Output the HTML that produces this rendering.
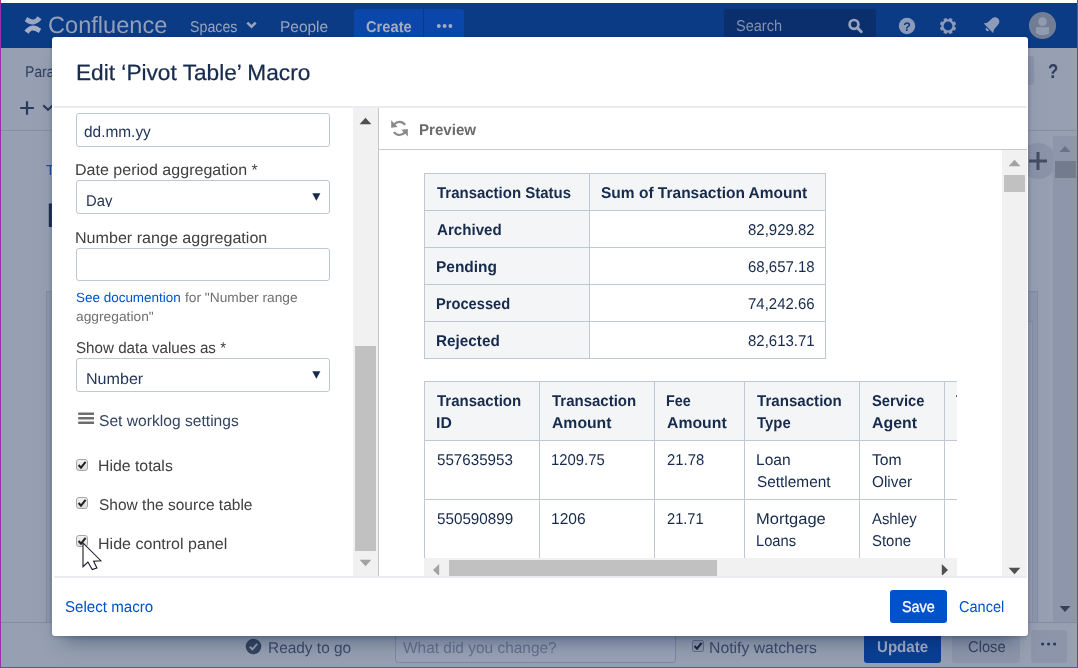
<!DOCTYPE html>
<html lang="en">
<head>
<meta charset="utf-8">
<title>Edit 'Pivot Table' Macro - Confluence</title>
<style>
html,body{margin:0;padding:0;}
body{width:1078px;height:668px;position:relative;overflow:hidden;background:#96a0b2;font-family:"Liberation Sans",sans-serif;text-rendering:geometricPrecision;}
.abs,.t,div,svg{position:absolute;}
div{box-sizing:border-box;}
.t{white-space:nowrap;line-height:1;transform-origin:0 50%;}
#bg{left:0;top:0;width:1078px;height:668px;overflow:hidden;will-change:transform;}
#dlg{left:0;top:0;width:1078px;height:668px;will-change:transform;}
#panel{left:52px;top:37px;width:976px;height:599px;background:#fff;border-radius:3px;box-shadow:0 14px 20px -11px rgba(9,30,66,.5),0 1px 4px rgba(9,30,66,.22);}
.inp{left:76px;width:254px;height:34px;border:1px solid #c1c7d0;border-radius:3px;background:#fff;}
.cb{left:76px;width:12px;height:12px;border:1px solid #a6a6a6;border-radius:3px;background:linear-gradient(#f2f2f2,#dddddd);}
</style>
</head>
<body>
<!-- ================= dimmed background page ================= -->
<div id="bg">
  <div style="left:0;top:0;width:1078px;height:3px;background:#fff"></div>
  <div style="left:0;top:3px;width:1078px;height:45px;background:#0a3b84"></div>
  <!-- confluence logo -->
  <svg style="left:22px;top:14px" width="22" height="22" viewBox="0 0 22 22">
    <path id="rib" d="M5.2 3.1 L2.8 7.2 C6 9.6 9 10.8 11.5 10.4 C14.5 10 17.5 8 19.6 5.2 L15.4 2.2 C14.2 4 13 5.2 11.8 5.4 C9.8 5.8 7.5 4.6 5.2 3.1 Z" fill="#9ba7bf"/>
    <path d="M5.2 3.1 L2.8 7.2 C6 9.6 9 10.8 11.5 10.4 C14.5 10 17.5 8 19.6 5.2 L15.4 2.2 C14.2 4 13 5.2 11.8 5.4 C9.8 5.8 7.5 4.6 5.2 3.1 Z" fill="#a3aec4" transform="rotate(180 11 11)"/>
  </svg>
  <!-- spaces chevron -->
  <svg style="left:246px;top:21px" width="11" height="8" viewBox="0 0 11 8"><path d="M1.3 1.6 L5.5 5.6 L9.7 1.6" fill="none" stroke="#98a4bc" stroke-width="2.6"/></svg>
  <!-- create buttons -->
  <div style="left:354px;top:9px;width:69px;height:32px;background:#0b47ab;border-radius:3px 0 0 3px"></div>
  <div style="left:424px;top:9px;width:40px;height:32px;background:#0b47ab;border-radius:0 3px 3px 0"></div>
  <svg style="left:436px;top:23px" width="18" height="6" viewBox="0 0 18 6"><circle cx="2.8" cy="3" r="1.95" fill="#a4acbf"/><circle cx="8.6" cy="3" r="1.95" fill="#a4acbf"/><circle cx="14.4" cy="3" r="1.95" fill="#a4acbf"/></svg>
  <!-- search -->
  <div style="left:724px;top:9px;width:152px;height:34px;background:#0a2f6c;border-radius:3px"></div>
  <svg style="left:847px;top:17px" width="18" height="18" viewBox="0 0 18 18"><circle cx="7.0" cy="7.4" r="4.4" fill="none" stroke="#97a4bf" stroke-width="2.7"/><path d="M10.4 10.9 L14.3 14.8" stroke="#97a4bf" stroke-width="2.9" stroke-linecap="round"/></svg>
  <!-- help -->
  <svg style="left:898px;top:17px" width="18" height="18" viewBox="0 0 18 18"><circle cx="9" cy="9" r="8.2" fill="#8d9bb8"/><text x="9" y="13.6" text-anchor="middle" font-family="Liberation Sans, sans-serif" font-weight="bold" font-size="12.5" fill="#0a3b84">?</text></svg>
  <!-- gear -->
  <svg style="left:937.7px;top:15.8px" width="20" height="20" viewBox="-10 -10 20 20">
    <g fill="#8d9bb8" transform="rotate(22.5)"><rect x="-1.7" y="-8.2" width="3.4" height="16.4" rx="0.5"/><rect x="-1.7" y="-8.2" width="3.4" height="16.4" rx="0.5" transform="rotate(45)"/><rect x="-1.7" y="-8.2" width="3.4" height="16.4" rx="0.5" transform="rotate(90)"/><rect x="-1.7" y="-8.2" width="3.4" height="16.4" rx="0.5" transform="rotate(135)"/></g>
    <circle r="5.5" fill="none" stroke="#8d9bb8" stroke-width="2.4"/><circle r="4.4" fill="#0a3b84"/>
  </svg>
  <!-- bell -->
  <svg style="left:980px;top:12px" width="24" height="24" viewBox="0 0 24 24"><g transform="translate(12.64 12) rotate(45)" fill="#8d9bb8"><path d="M-6.6 6 L6.6 6 L4.7 2.6 L4.4 -3 C4.4 -6 2.5 -7.7 0 -7.7 C-2.5 -7.7 -4.4 -6 -4.4 -3 L-4.7 2.6 Z"/><path d="M-2.1 7 A2.1 2.1 0 0 0 2.1 7 Z"/></g></svg>
  <!-- avatar -->
  <svg style="left:1028px;top:11px" width="29" height="29" viewBox="0 0 29 29"><circle cx="14.5" cy="14.5" r="13.6" fill="#717d95"/><circle cx="14.5" cy="10.6" r="4.3" fill="#919bb0"/><path d="M8 16.2 h13 v6.2 q-6.5 3.6 -13 0 z" fill="#919bb0"/></svg>

  <!-- editor toolbar -->
  <div style="left:0;top:130px;width:1078px;height:1px;background:#87909f"></div>
  <div style="left:1028px;top:56px;width:6px;height:29px;background:#8a93a8;border-radius:0 3px 3px 0"></div>
  <svg style="left:19px;top:100px" width="16" height="16" viewBox="0 0 16 16"><path d="M8 1.2 V14.8 M1.2 8 H14.8" stroke="#2a3a5c" stroke-width="2.2"/></svg>
  <svg style="left:42px;top:104px" width="12" height="8" viewBox="0 0 12 8"><path d="M1.2 1.3 L6 5.8 L10.8 1.3" fill="none" stroke="#2a3a5c" stroke-width="2.1"/></svg>
  <!-- macro placeholder boxes -->
  <div style="left:46px;top:291px;width:992px;height:340px;background:#8e97ac;border:1px solid #838ca1"></div>
  <div style="left:50px;top:321px;width:983px;height:310px;background:#939cb1;border:1px solid #8790a5"></div>
  <!-- plus circle -->
  <div style="left:1020px;top:143px;width:36px;height:36px;border-radius:18px;background:#8a93a8"></div>
  <svg style="left:1028px;top:151px" width="20" height="20" viewBox="0 0 20 20"><path d="M10 1 V19 M1 10 H19" stroke="#434d64" stroke-width="3"/></svg>
  <!-- page scrollbar -->
  <div style="left:1053px;top:136px;width:24px;height:486px;background:#8d96ab"></div>
  <div style="left:1055px;top:161px;width:21px;height:17px;background:#737b8e"></div>
  <svg style="left:1059px;top:145px" width="12" height="8" viewBox="0 0 12 8"><path d="M0.5 7 L6 1 L11.5 7 Z" fill="#6a7286"/></svg>
  <svg style="left:1059px;top:605px" width="12" height="8" viewBox="0 0 12 8"><path d="M0.5 1 L6 7 L11.5 1 Z" fill="#38415a"/></svg>
  <!-- bottom bar -->
  <div style="left:0;top:622px;width:1078px;height:45px;background:#96a0b2;border-top:1px solid #838ca1"></div>
  <svg style="left:245px;top:638px" width="17" height="17" viewBox="0 0 17 17"><circle cx="8.5" cy="8.5" r="7.8" fill="#36435f"/><path d="M4.8 8.8 L7.4 11.3 L12.2 5.9" fill="none" stroke="#96a0b2" stroke-width="1.9"/></svg>
  <div style="left:395px;top:630px;width:281px;height:33px;border:1px solid #7f889e;border-radius:3px;background:#98a1b6"></div>
  <div style="left:692px;top:640px;width:12px;height:12px;border:1px solid #687189;border-radius:2px;background:#8f98ac"></div>
  <svg style="left:692px;top:640px" width="12" height="12" viewBox="0 0 12 12"><path d="M2.6 6 L5 8.6 L9.6 2.8" fill="none" stroke="#1c2438" stroke-width="2"/></svg>
  <div style="left:864px;top:630px;width:77px;height:33px;background:#0a3f95;border-radius:3px"></div>
  <div style="left:952px;top:630px;width:68px;height:33px;background:#8c95aa;border-radius:3px"></div>
  <div style="left:1031px;top:629.5px;width:36px;height:33.5px;background:#8c95aa;border-radius:3px"></div>
  <svg style="left:1040px;top:641px" width="18" height="6" viewBox="0 0 18 6"><circle cx="2.6" cy="3" r="1.6" fill="#2a3a5c"/><circle cx="8.6" cy="3" r="1.6" fill="#2a3a5c"/><circle cx="14.6" cy="3" r="1.6" fill="#2a3a5c"/></svg>
<span class="t" id="t0" style="left:48.00px;top:14.25px;font-size:23.5px;color:#939fb8;transform:scaleX(1.0041);">Confluence</span>
<span class="t" id="t1" style="left:190.40px;top:20.25px;font-size:15.6px;color:#98a4bc;transform:scaleX(0.9115);">Spaces</span>
<span class="t" id="t2" style="left:280.01px;top:20.25px;font-size:15.6px;color:#98a4bc;transform:scaleX(0.9917);">People</span>
<span class="t" id="t3" style="left:366.00px;top:20.25px;font-size:15.6px;color:#a4acbf;font-weight:bold;transform:scaleX(0.9412);">Create</span>
<span class="t" id="t4" style="left:735.60px;top:19.25px;font-size:15.6px;color:#8191b2;transform:scaleX(0.9313);">Search</span>
<span class="t" id="t5" style="left:24.51px;top:65.25px;font-size:15.6px;color:#2a3a5c;transform:scaleX(0.8938);">Paragraph</span>
<span class="t" id="t6" style="left:1048.00px;top:62.25px;font-size:20px;color:#2a3a5c;font-weight:bold;transform:scaleX(0.8332);">?</span>
<span class="t" id="t7" style="left:46.00px;top:164.25px;font-size:14.5px;color:#1d4fa0;transform:scaleX(0.9888);">Table Filter and Charts</span>
<span class="t" id="t8" style="left:46.01px;top:199.25px;font-size:34px;color:#1f2f50;transform:scaleX(0.9951);">Pivot Table</span>
<span class="t" id="t9" style="left:267.51px;top:641.25px;font-size:15.6px;color:#3d4a69;transform:scaleX(0.9890);">Ready to go</span>
<span class="t" id="t10" style="left:402.50px;top:641.25px;font-size:15.6px;color:#66728c;transform:scaleX(0.9903);">What did you change?</span>
<span class="t" id="t11" style="left:708.99px;top:641.25px;font-size:15.6px;color:#3d4a69;transform:scaleX(1.0114);">Notify watchers</span>
<span class="t" id="t12" style="left:876.80px;top:640.25px;font-size:15.6px;color:#a6b0c4;font-weight:bold;transform:scaleX(0.9664);">Update</span>
<span class="t" id="t13" style="left:967.80px;top:640.25px;font-size:15.6px;color:#36435f;transform:scaleX(0.9438);">Close</span>
</div>

<!-- ================= dialog ================= -->
<div id="dlg">
  <div id="panel"></div>
  <div style="left:54px;top:106px;width:973px;height:2px;background:#ebecf0"></div>
  <div style="left:54px;top:576px;width:973px;height:2px;background:#ebecf0"></div>
  <!-- left form -->
  <div class="inp" style="top:113px"></div>
  <div class="inp" style="top:180px"></div>
  <div id="sel1" style="left:77px;top:181px;width:252px;height:26px;overflow:hidden"><span class="t" id="t17" style="left:9.45px;top:13.25px;font-size:15.6px;color:#253858;transform:scaleX(0.9504);">Day</span></div>
  <div class="inp" style="top:248px;height:33px"></div>
  <div class="inp" style="top:358px"></div>
  <svg style="left:311.5px;top:192.6px" width="9" height="8.2" viewBox="0 0 9 8.2"><path d="M0.3 0.3 H8.4 L4.35 7.8 Z" fill="#172b4d"/></svg>
  <svg style="left:311.5px;top:370.8px" width="9" height="8.2" viewBox="0 0 9 8.2"><path d="M0.3 0.3 H8.4 L4.35 7.8 Z" fill="#172b4d"/></svg>
  <svg style="left:78px;top:412px" width="17" height="13" viewBox="0 0 17 13"><path d="M0.2 1.8 H16 M0.2 6.3 H16 M0.2 10.8 H16" stroke="#6e6e6e" stroke-width="2.4"/></svg>
  <div class="cb" style="top:459px"></div>
  <div class="cb" style="top:497px"></div>
  <div class="cb" style="top:535px"></div>
  <svg style="left:76px;top:459px" width="12" height="12" viewBox="0 0 12 12"><path d="M2.6 6 L5 8.7 L9.6 2.8" fill="none" stroke="#222" stroke-width="2"/></svg>
  <svg style="left:76px;top:497px" width="12" height="12" viewBox="0 0 12 12"><path d="M2.6 6 L5 8.7 L9.6 2.8" fill="none" stroke="#222" stroke-width="2"/></svg>
  <svg style="left:76px;top:535px" width="12" height="12" viewBox="0 0 12 12"><path d="M2.6 6 L5 8.7 L9.6 2.8" fill="none" stroke="#222" stroke-width="2"/></svg>
  <!-- cursor -->
  <svg style="left:82px;top:542px" width="21" height="30" viewBox="0 0 21 30"><path d="M1 1 L1 24.7 L5.9 20 L10.3 27.6 L14.9 26 L11.6 19.3 L18.9 18.7 Z" fill="#fff" stroke="#111122" stroke-width="1.05" stroke-linejoin="miter"/></svg>
  <!-- left scrollbar -->
  <div style="left:353px;top:108px;width:25px;height:468px;background:#f1f1f1"></div>
  <div style="left:355px;top:346px;width:21px;height:205px;background:#c1c1c1"></div>
  <svg style="left:359px;top:117px" width="13" height="8" viewBox="0 0 13 8"><path d="M0.6 7.2 L6.5 0.8 L12.4 7.2 Z" fill="#505050"/></svg>
  <svg style="left:359px;top:559px" width="13" height="8" viewBox="0 0 13 8"><path d="M0.6 0.8 L6.5 7.2 L12.4 0.8 Z" fill="#a3a3a3"/></svg>
  <div style="left:378px;top:108px;width:1px;height:468px;background:#c5c7cc"></div>
  <!-- preview header -->
  <div style="left:379px;top:149px;width:648px;height:1px;background:#c9c9c9"></div>
  <svg style="left:388px;top:116px" width="24" height="25" viewBox="0 0 24 25"><g><path d="M17.04 8.81 A6.6 6.6 0 0 0 6.30 8.34" fill="none" stroke="#8a8a8a" stroke-width="2.2"/><path d="M3.2 4.2 L3.2 11.7 L9.6 11.0 Z" fill="#8a8a8a"/></g><g transform="rotate(180 11.5 12.4)"><path d="M17.04 8.81 A6.6 6.6 0 0 0 6.30 8.34" fill="none" stroke="#8a8a8a" stroke-width="2.2"/><path d="M3.2 4.2 L3.2 11.7 L9.6 11.0 Z" fill="#8a8a8a"/></g></svg>
  <!-- preview scrollbar -->
  <div style="left:1002px;top:150px;width:25px;height:426px;background:#f1f1f1"></div>
  <div style="left:1004px;top:175px;width:21px;height:17px;background:#c1c1c1"></div>
  <svg style="left:1008px;top:159px" width="13" height="8" viewBox="0 0 13 8"><path d="M0.6 7.2 L6.5 0.8 L12.4 7.2 Z" fill="#a3a3a3"/></svg>
  <svg style="left:1008px;top:567px" width="13" height="8" viewBox="0 0 13 8"><path d="M0.6 0.8 L6.5 7.2 L12.4 0.8 Z" fill="#505050"/></svg>
  <!-- table 1 -->
  <div style="left:424px;top:173px;width:402px;height:186px;background:#c1c7d0"></div>
  <div style="left:425px;top:174px;width:164px;height:36px;background:#f4f5f7"></div>
  <div style="left:590px;top:174px;width:235px;height:36px;background:#f4f5f7"></div>
  <div style="left:425px;top:211px;width:164px;height:36px;background:#f4f5f7"></div>
  <div style="left:590px;top:211px;width:235px;height:36px;background:#fff"></div>
  <div style="left:425px;top:248px;width:164px;height:36px;background:#f4f5f7"></div>
  <div style="left:590px;top:248px;width:235px;height:36px;background:#fff"></div>
  <div style="left:425px;top:285px;width:164px;height:36px;background:#f4f5f7"></div>
  <div style="left:590px;top:285px;width:235px;height:36px;background:#fff"></div>
  <div style="left:425px;top:322px;width:164px;height:36px;background:#f4f5f7"></div>
  <div style="left:590px;top:322px;width:235px;height:36px;background:#fff"></div>
  <!-- table 2 (clipped) -->
  <div id="tbl2" style="left:424px;top:381px;width:533px;height:177px;overflow:hidden">
    <div style="left:0;top:0;width:700px;height:300px;background:#c1c7d0"></div>
    <div style="left:1px;top:1px;width:114px;height:58px;background:#f4f5f7"></div>
    <div style="left:116px;top:1px;width:114px;height:58px;background:#f4f5f7"></div>
    <div style="left:231px;top:1px;width:89px;height:58px;background:#f4f5f7"></div>
    <div style="left:321px;top:1px;width:114px;height:58px;background:#f4f5f7"></div>
    <div style="left:436px;top:1px;width:84px;height:58px;background:#f4f5f7"></div>
    <div style="left:521px;top:1px;width:114px;height:58px;background:#f4f5f7"></div>
    <div style="left:1px;top:60px;width:114px;height:58px;background:#fff"></div>
    <div style="left:116px;top:60px;width:114px;height:58px;background:#fff"></div>
    <div style="left:231px;top:60px;width:89px;height:58px;background:#fff"></div>
    <div style="left:321px;top:60px;width:114px;height:58px;background:#fff"></div>
    <div style="left:436px;top:60px;width:84px;height:58px;background:#fff"></div>
    <div style="left:521px;top:60px;width:114px;height:58px;background:#fff"></div>
    <div style="left:1px;top:119px;width:114px;height:58px;background:#fff"></div>
    <div style="left:116px;top:119px;width:114px;height:58px;background:#fff"></div>
    <div style="left:231px;top:119px;width:89px;height:58px;background:#fff"></div>
    <div style="left:321px;top:119px;width:114px;height:58px;background:#fff"></div>
    <div style="left:436px;top:119px;width:84px;height:58px;background:#fff"></div>
    <div style="left:521px;top:119px;width:114px;height:58px;background:#fff"></div>
<span class="t" id="t42" style="left:13.00px;top:13.25px;font-size:15.6px;color:#172b4d;font-weight:bold;transform:scaleX(0.9620);">Transaction</span>
<span class="t" id="t43" style="left:11.99px;top:35.25px;font-size:15.6px;color:#172b4d;font-weight:bold;transform:scaleX(1.0117);">ID</span>
<span class="t" id="t44" style="left:128.00px;top:13.25px;font-size:15.6px;color:#172b4d;font-weight:bold;transform:scaleX(0.9620);">Transaction</span>
<span class="t" id="t45" style="left:128.00px;top:35.25px;font-size:15.6px;color:#172b4d;font-weight:bold;transform:scaleX(1.0100);">Amount</span>
<span class="t" id="t46" style="left:242.28px;top:13.25px;font-size:15.6px;color:#172b4d;font-weight:bold;transform:scaleX(0.9198);">Fee</span>
<span class="t" id="t47" style="left:243.00px;top:35.25px;font-size:15.6px;color:#172b4d;font-weight:bold;transform:scaleX(1.0134);">Amount</span>
<span class="t" id="t48" style="left:333.00px;top:13.25px;font-size:15.6px;color:#172b4d;font-weight:bold;transform:scaleX(0.9689);">Transaction</span>
<span class="t" id="t49" style="left:333.00px;top:35.25px;font-size:15.6px;color:#172b4d;font-weight:bold;transform:scaleX(0.9557);">Type</span>
<span class="t" id="t50" style="left:447.60px;top:13.25px;font-size:15.6px;color:#172b4d;font-weight:bold;transform:scaleX(0.9440);">Service</span>
<span class="t" id="t51" style="left:447.60px;top:35.25px;font-size:15.6px;color:#172b4d;font-weight:bold;transform:scaleX(1.0183);">Agent</span>
<span class="t" id="t52" style="left:532.30px;top:13.25px;font-size:15.6px;color:#172b4d;font-weight:bold;transform:scaleX(0.9620);">Transaction</span>
<span class="t" id="t53" style="left:532.97px;top:35.25px;font-size:15.6px;color:#172b4d;font-weight:bold;transform:scaleX(1.0260);">Date</span>
<span class="t" id="t54" style="left:13.00px;top:72.25px;font-size:15.6px;color:#172b4d;transform:scaleX(0.9717);">557635953</span>
<span class="t" id="t55" style="left:127.05px;top:72.25px;font-size:15.6px;color:#172b4d;transform:scaleX(0.9515);">1209.75</span>
<span class="t" id="t56" style="left:243.00px;top:72.25px;font-size:15.6px;color:#172b4d;transform:scaleX(0.9515);">21.78</span>
<span class="t" id="t57" style="left:332.00px;top:72.25px;font-size:15.6px;color:#172b4d;transform:scaleX(0.9991);">Loan</span>
<span class="t" id="t58" style="left:333.00px;top:94.25px;font-size:15.6px;color:#172b4d;transform:scaleX(0.9865);">Settlement</span>
<span class="t" id="t59" style="left:447.60px;top:72.25px;font-size:15.6px;color:#172b4d;transform:scaleX(1.0078);">Tom</span>
<span class="t" id="t60" style="left:447.60px;top:94.25px;font-size:15.6px;color:#172b4d;transform:scaleX(0.9842);">Oliver</span>
<span class="t" id="t61" style="left:13.00px;top:131.25px;font-size:15.6px;color:#172b4d;transform:scaleX(0.9756);">550590899</span>
<span class="t" id="t62" style="left:127.00px;top:131.25px;font-size:15.6px;color:#172b4d;transform:scaleX(0.9991);">1206</span>
<span class="t" id="t63" style="left:243.00px;top:131.25px;font-size:15.6px;color:#172b4d;transform:scaleX(0.9385);">21.71</span>
<span class="t" id="t64" style="left:331.94px;top:131.25px;font-size:15.6px;color:#172b4d;transform:scaleX(1.0589);">Mortgage</span>
<span class="t" id="t65" style="left:332.06px;top:153.25px;font-size:15.6px;color:#172b4d;transform:scaleX(0.9424);">Loans</span>
<span class="t" id="t66" style="left:447.60px;top:131.25px;font-size:15.6px;color:#172b4d;transform:scaleX(0.9529);">Ashley</span>
<span class="t" id="t67" style="left:447.60px;top:153.25px;font-size:15.6px;color:#172b4d;transform:scaleX(0.9578);">Stone</span>
  </div>
  <!-- horizontal scrollbar -->
  <div style="left:424px;top:558px;width:533px;height:18px;background:#f1f1f1"></div>
  <div style="left:449px;top:560px;width:268px;height:16px;background:#c1c1c1"></div>
  <svg style="left:432px;top:564px" width="8" height="11" viewBox="0 0 8 11"><path d="M7.2 0 L1 6 L7.2 12 Z" fill="#a3a3a3"/></svg>
  <svg style="left:941px;top:564px" width="8" height="11" viewBox="0 0 8 11"><path d="M0.8 0 L7 6 L0.8 12 Z" fill="#505050"/></svg>
  <!-- footer buttons -->
  <div style="left:890px;top:590px;width:57px;height:33px;background:#0052cc;border-radius:3px"></div>
<span class="t" id="t14" style="left:75.97px;top:62.25px;font-size:22px;color:#172b4d;transform:scaleX(1.0301);-webkit-text-stroke:0.25px #172b4d;">Edit ‘Pivot Table’ Macro</span>
<span class="t" id="t15" style="left:83.70px;top:125.25px;font-size:15.6px;color:#253858;transform:scaleX(0.9882);">dd.mm.yy</span>
<span class="t" id="t16" style="left:74.97px;top:163.25px;font-size:15.6px;color:#404040;transform:scaleX(1.0285);">Date period aggregation *</span>
<span class="t" id="t18" style="left:74.97px;top:231.25px;font-size:15.6px;color:#404040;transform:scaleX(1.0318);">Number range aggregation</span>
<span class="t" id="t19" style="left:76.00px;top:291.25px;font-size:13.4px;color:#0052cc;transform:scaleX(1.0049);">See documention</span>
<span class="t" id="t20" style="left:184.50px;top:291.25px;font-size:13.4px;color:#707070;transform:scaleX(1.0269);">for "Number range</span>
<span class="t" id="t21" style="left:76.00px;top:310.25px;font-size:13.4px;color:#707070;transform:scaleX(1.0297);">aggregation"</span>
<span class="t" id="t22" style="left:76.00px;top:341.25px;font-size:15.6px;color:#404040;transform:scaleX(0.9725);">Show data values as *</span>
<span class="t" id="t23" style="left:86.37px;top:372.25px;font-size:15.6px;color:#253858;transform:scaleX(1.0318);">Number</span>
<span class="t" id="t24" style="left:99.00px;top:414.25px;font-size:15.6px;color:#344563;transform:scaleX(1.0018);">Set worklog settings</span>
<span class="t" id="t25" style="left:97.98px;top:459.25px;font-size:15.6px;color:#404040;transform:scaleX(1.0152);">Hide totals</span>
<span class="t" id="t26" style="left:99.00px;top:498.25px;font-size:15.6px;color:#404040;transform:scaleX(0.9945);">Show the source table</span>
<span class="t" id="t27" style="left:97.97px;top:537.25px;font-size:15.6px;color:#404040;transform:scaleX(1.0287);">Hide control panel</span>
<span class="t" id="t28" style="left:419.33px;top:123.25px;font-size:15.6px;color:#6b6b6b;font-weight:bold;transform:scaleX(0.9690);">Preview</span>
<span class="t" id="t29" style="left:65.00px;top:600.25px;font-size:15.6px;color:#0052cc;transform:scaleX(0.9690);">Select macro</span>
<span class="t" id="t30" style="left:902.40px;top:600.25px;font-size:15.6px;color:#ffffff;transform:scaleX(0.9233);-webkit-text-stroke:0.3px #fff;">Save</span>
<span class="t" id="t31" style="left:958.90px;top:600.25px;font-size:15.6px;color:#0052cc;transform:scaleX(0.9317);">Cancel</span>
<span class="t" id="t32" style="left:437.00px;top:186.25px;font-size:15.6px;color:#172b4d;font-weight:bold;transform:scaleX(0.9604);">Transaction Status</span>
<span class="t" id="t33" style="left:601.40px;top:186.25px;font-size:15.6px;color:#172b4d;font-weight:bold;transform:scaleX(0.9944);">Sum of Transaction Amount</span>
<span class="t" id="t34" style="left:437.00px;top:223.25px;font-size:15.6px;color:#172b4d;font-weight:bold;transform:scaleX(0.9697);">Archived</span>
<span class="t" id="t35" style="left:747.60px;top:223.25px;font-size:15.6px;color:#172b4d;transform:scaleX(0.9607);">82,929.82</span>
<span class="t" id="t36" style="left:436.01px;top:260.25px;font-size:15.6px;color:#172b4d;font-weight:bold;transform:scaleX(0.9918);">Pending</span>
<span class="t" id="t37" style="left:747.60px;top:260.25px;font-size:15.6px;color:#172b4d;transform:scaleX(0.9607);">68,657.18</span>
<span class="t" id="t38" style="left:436.06px;top:297.25px;font-size:15.6px;color:#172b4d;font-weight:bold;transform:scaleX(0.9397);">Processed</span>
<span class="t" id="t39" style="left:747.60px;top:297.25px;font-size:15.6px;color:#172b4d;transform:scaleX(0.9607);">74,242.66</span>
<span class="t" id="t40" style="left:436.02px;top:334.25px;font-size:15.6px;color:#172b4d;font-weight:bold;transform:scaleX(0.9813);">Rejected</span>
<span class="t" id="t41" style="left:747.60px;top:334.25px;font-size:15.6px;color:#172b4d;transform:scaleX(0.9607);">82,613.71</span>
</div>
<!-- purple window frame -->
<div style="left:0;top:0;width:1px;height:668px;background:#9b2fae"></div>
<div style="left:1077px;top:0;width:1px;height:668px;background:#9b2fae"></div>
<div style="left:0;top:667px;width:1078px;height:1px;background:#9b2fae"></div>
</body>
</html>
